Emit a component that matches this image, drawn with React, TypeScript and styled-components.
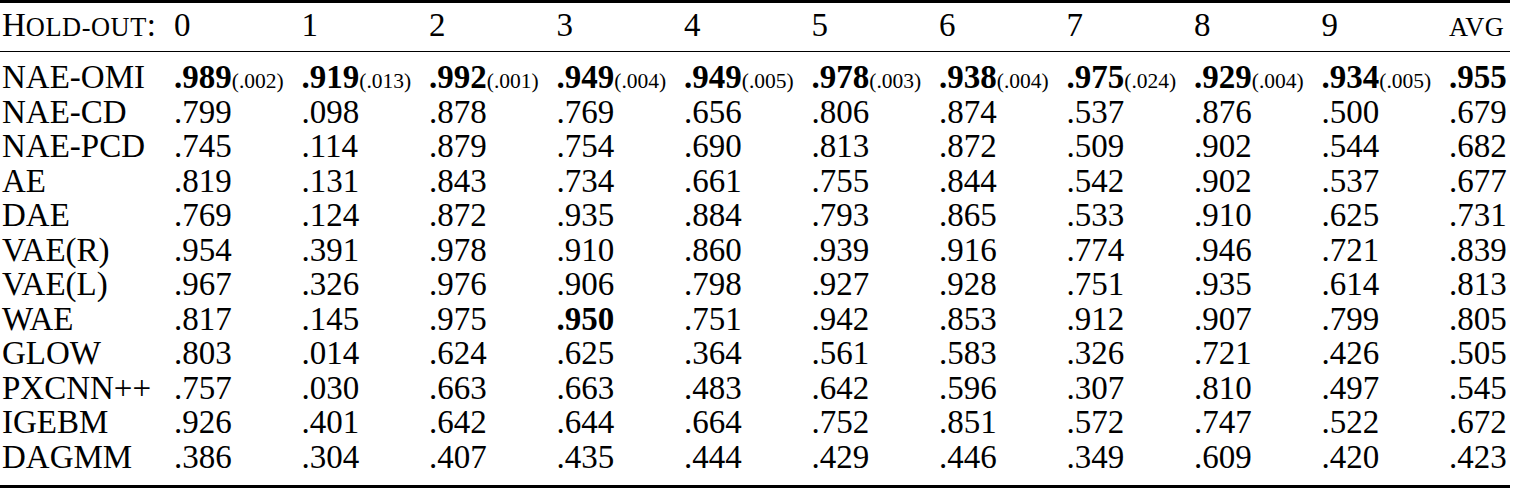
import React from 'react'
import styled, { createGlobalStyle } from 'styled-components'

const GlobalStyle = createGlobalStyle`
  html, body {
    margin: 0;
    padding: 0;
    background: #ffffff;
  }
  body {
    font-family: 'Liberation Serif', 'Times New Roman', serif;
    color: #000000;
  }
`

type Cell = {
  v: string
  bold?: boolean
  sd?: string
}

type Row = {
  name: string
  cells: Cell[]
}

const plain = (...vs: string[]): Cell[] => vs.map((v) => ({ v }))

const rows: Row[] = [
  {
    name: 'NAE-OMI',
    cells: [
      { v: '.989', bold: true, sd: '(.002)' },
      { v: '.919', bold: true, sd: '(.013)' },
      { v: '.992', bold: true, sd: '(.001)' },
      { v: '.949', bold: true, sd: '(.004)' },
      { v: '.949', bold: true, sd: '(.005)' },
      { v: '.978', bold: true, sd: '(.003)' },
      { v: '.938', bold: true, sd: '(.004)' },
      { v: '.975', bold: true, sd: '(.024)' },
      { v: '.929', bold: true, sd: '(.004)' },
      { v: '.934', bold: true, sd: '(.005)' },
      { v: '.955', bold: true },
    ],
  },
  { name: 'NAE-CD', cells: plain('.799', '.098', '.878', '.769', '.656', '.806', '.874', '.537', '.876', '.500', '.679') },
  { name: 'NAE-PCD', cells: plain('.745', '.114', '.879', '.754', '.690', '.813', '.872', '.509', '.902', '.544', '.682') },
  { name: 'AE', cells: plain('.819', '.131', '.843', '.734', '.661', '.755', '.844', '.542', '.902', '.537', '.677') },
  { name: 'DAE', cells: plain('.769', '.124', '.872', '.935', '.884', '.793', '.865', '.533', '.910', '.625', '.731') },
  { name: 'VAE(R)', cells: plain('.954', '.391', '.978', '.910', '.860', '.939', '.916', '.774', '.946', '.721', '.839') },
  { name: 'VAE(L)', cells: plain('.967', '.326', '.976', '.906', '.798', '.927', '.928', '.751', '.935', '.614', '.813') },
  {
    name: 'WAE',
    cells: [
      ...plain('.817', '.145', '.975'),
      { v: '.950', bold: true },
      ...plain('.751', '.942', '.853', '.912', '.907', '.799', '.805'),
    ],
  },
  { name: 'GLOW', cells: plain('.803', '.014', '.624', '.625', '.364', '.561', '.583', '.326', '.721', '.426', '.505') },
  { name: 'PXCNN++', cells: plain('.757', '.030', '.663', '.663', '.483', '.642', '.596', '.307', '.810', '.497', '.545') },
  { name: 'IGEBM', cells: plain('.926', '.401', '.642', '.644', '.664', '.752', '.851', '.572', '.747', '.522', '.672') },
  { name: 'DAGMM', cells: plain('.386', '.304', '.407', '.435', '.444', '.429', '.446', '.349', '.609', '.420', '.423') },
]

const holdOuts = ['0', '1', '2', '3', '4', '5', '6', '7', '8', '9']

const Table = styled.table`
  width: 1510px;
  border-collapse: collapse;
  table-layout: fixed;
  font-size: 33px;
  line-height: 34.5px;
  border-top: 3px solid #000000;
  border-bottom: 3px solid #000000;
`

const Head = styled.thead`
  border-bottom: 1.5px solid #000000;
`

const Col = styled.col<{ $w: number }>`
  width: ${({ $w }) => $w}px;
`

const HeadCell = styled.th<{ $first?: boolean }>`
  font-weight: normal;
  text-align: left;
  white-space: nowrap;
  padding: ${({ $first }) => ($first ? '5px 0 8px 2px' : '5px 0 8px 0')};
  vertical-align: baseline;
`

// LaTeX-like small caps: uppercase letters at a reduced size
const Sc = styled.span`
  text-transform: uppercase;
  font-size: 0.8em;
  line-height: 1;
  letter-spacing: 0.02em;
`

const Body = styled.tbody`
  & > tr:first-child > td {
    padding-top: 8.5px;
  }
  & > tr:last-child > td {
    padding-bottom: 11px;
  }
`

const NameCell = styled.td`
  padding: 0 0 0 2px;
  white-space: nowrap;
  vertical-align: baseline;
`

const ValueCell = styled.td`
  padding: 0;
  white-space: nowrap;
  vertical-align: baseline;
`

const Value = styled.span<{ $bold?: boolean }>`
  font-weight: ${({ $bold }) => ($bold ? 'bold' : 'normal')};
`

const Sd = styled.span`
  font-size: 21.5px;
  line-height: 1;
`

const colWidths = [174, ...holdOuts.map(() => 127.5), 61]

export default function App() {
  return (
    <>
      <GlobalStyle />
      <Table>
        <colgroup>
          {colWidths.map((w, i) => (
            <Col key={i} $w={w} />
          ))}
        </colgroup>
        <Head>
          <tr>
            <HeadCell $first>
              H<Sc>old-out</Sc>:
            </HeadCell>
            {holdOuts.map((h) => (
              <HeadCell key={h}>{h}</HeadCell>
            ))}
            <HeadCell>
              <Sc>avg</Sc>
            </HeadCell>
          </tr>
        </Head>
        <Body>
          {rows.map((row) => (
            <tr key={row.name}>
              <NameCell>{row.name}</NameCell>
              {row.cells.map((c, i) => (
                <ValueCell key={i}>
                  <Value $bold={c.bold}>{c.v}</Value>
                  {c.sd && <Sd>{c.sd}</Sd>}
                </ValueCell>
              ))}
            </tr>
          ))}
        </Body>
      </Table>
    </>
  )
}
